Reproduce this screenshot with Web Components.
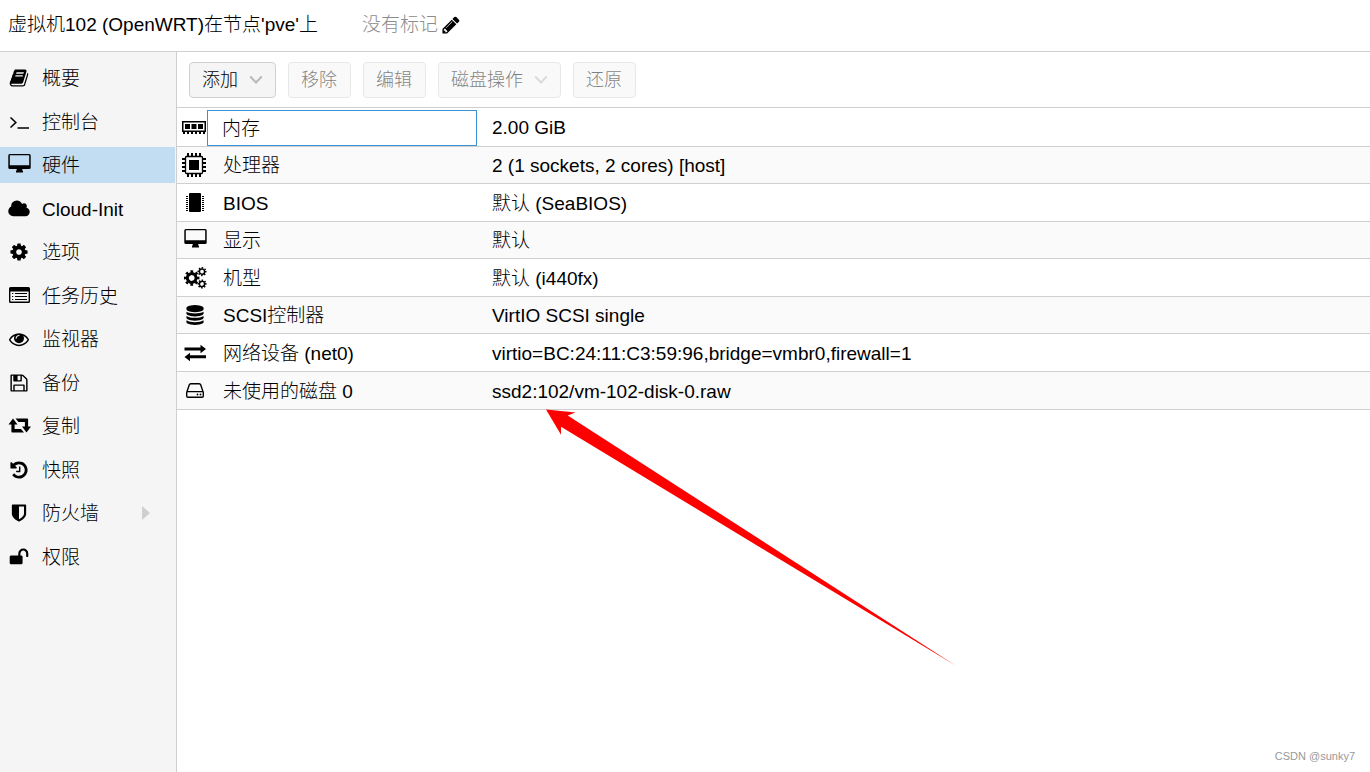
<!DOCTYPE html>
<html lang="zh-CN">
<head>
<meta charset="utf-8">
<meta name="viewport" content="width=device-width, initial-scale=1">
<title>虚拟机102 (OpenWRT)</title>
<style>
  html, body { margin: 0; }
  body {
    font-family: "Liberation Sans", "Noto Sans CJK SC", sans-serif;
    font-size: 19px;
    font-weight: 300;
    line-height: 24px;
    color: #000;
    background: #fff;
  }
</style>
</head>
<body>
<pve-app></pve-app>

<script>
const COG = 'M1152 896q0-106-75-181t-181-75-181 75-75 181 75 181 181 75 181-75 75-181zm512-109v222q0 12-8 23t-20 13l-185 28q-19 54-39 91 35 50 107 138 10 12 10 25t-9 23q-27 37-99 108t-94 71q-12 0-26-9l-138-108q-44 23-91 38-16 136-29 186-7 28-36 28h-222q-14 0-24.5-8.5t-11.5-21.5l-28-184q-49-16-90-37l-141 107q-10 9-25 9-14 0-25-11-126-114-165-168-7-10-7-23 0-12 8-23 15-21 51-66.5t54-70.5q-27-50-41-99l-183-27q-13-2-21-12.5t-8-23.5v-222q0-12 8-23t19-13l186-28q14-46 39-92-40-57-107-138-10-12-10-24 0-10 9-23 26-36 98.5-107.5t94.5-71.5q13 0 26 10l138 107q44-23 91-38 16-136 29-186 7-28 36-28h222q14 0 24.5 8.5t11.5 21.5l28 184q49 16 90 37l142-107q9-9 24-9 13 0 25 10 129 119 165 170 7 8 7 22 0 12-8 23-15 21-51 66.5t-54 70.5q26 50 41 98l183 28q13 2 21 12.5t8 23.5z';
const WIDE = '-179 -179 2150 2150';
const BOX = '0 0 24 24';
const ticks = [5, 9, 13, 17];

// A gear as a solid ring with eight dashes around it for the teeth.
const gear = (x, y, ring, width, teeth, depth) => {
  const dash = (2 * Math.PI * teeth / 16).toFixed(3);
  return `<g fill="none" stroke="currentColor" transform="translate(${x} ${y}) rotate(-12)"><circle r="${ring}" stroke-width="${width}"/><circle r="${teeth}" stroke-width="${depth}" stroke-dasharray="${dash}"/></g>`;
};

// name: [viewBox, markup]
const ICONS = {
  pencil: [WIDE, '<path d="M491 1536l91-91-235-235-91 91v107h128v128h107zm523-928q0-22-22-22-10 0-17 7l-542 542q-7 7-7 17 0 22 22 22 10 0 17-7l542-542q7-7 7-17zm-54-192l416 416-832 832h-416v-416zm683 96q0 53-37 90l-166 166-416-416 166-165q36-38 90-38 53 0 91 38l235 234q37 39 37 91z"/>'],
  book: [WIDE, '<path d="M1703 478q40 57 18 129l-275 906q-19 64-76.5 107.5t-122.5 43.5h-923q-77 0-148.5-53.5t-99.5-131.5q-24-67-2-127 0-4 3-27t4-37q1-8-3-21.5t-3-19.5q2-11 8-21t16.5-23.5 16.5-23.5q23-38 45-91.5t30-91.5q3-10 .5-30t-.5-28q3-11 17-28t17-23q21-36 42-92t25-90q1-9-2.5-32t.5-28q4-13 22-30.5t22-22.5q19-26 42.5-84.5t27.5-96.5q1-8-3-25.5t-2-26.5q2-8 9-18t18-23 17-21q8-12 16.5-30.5t15-35 16-36 19.5-32 26.5-23.5 36-11.5 47.5 5.5l-1 3q38-9 51-9h761q74 0 114 56t18 130l-274 906q-36 119-71.5 153.5t-128.5 34.5h-869q-27 0-38 15-11 16-1 43 24 70 144 70h923q29 0 56-15.5t35-41.5l300-987q7-22 5-57 38 15 59 43zm-1064 2q-4 13 2 22.5t20 9.5h608q13 0 25.5-9.5t16.5-22.5l21-64q4-13-2-22.5t-20-9.5h-608q-13 0-25.5 9.5t-16.5 22.5zm-83 256q-4 13 2 22.5t20 9.5h608q13 0 25.5-9.5t16.5-22.5l21-64q4-13-2-22.5t-20-9.5h-608q-13 0-25.5 9.5t-16.5 22.5z"/>'],
  terminal: [BOX, '<path d="M3.5 7.5l5.3 5-5.3 5M10.5 18h11.5" fill="none" stroke="currentColor" stroke-width="1.6"/>'],
  desktop: [BOX, '<path fill-rule="evenodd" d="M2.8 1H22.2Q23.7 1 23.7 2.5V14.6Q23.7 16.1 22.2 16.1H15.2Q15.2 17.6 16 18.3V19.6H9V18.3Q9.8 17.6 9.8 16.1H2.8Q1.3 16.1 1.3 14.6V2.5Q1.3 1 2.8 1zM2.8 2.3V12.3H22.2V2.3z"/>'],
  cloud: ['-51 -179 2150 2150', '<path d="M1984 1152q0 159-112.5 271.5t-271.5 112.5h-1088q-185 0-316.5-131.5t-131.5-316.5q0-132 71-241.5t187-163.5q-2-28-2-43 0-212 150-362t362-150q158 0 286.5 88t187.5 230q70-62 166-62 106 0 181 75t75 181q0 75-41 138 129 30 213 134.5t84 239.5z"/>'],
  cog: [WIDE, `<path d="${COG}"/>`],
  cogs: [BOX, gear(8.7, 12, 4.4, 3, 6.6, 2.4) + gear(19, 5.6, 2.6, 1.5, 3.8, 1.5) + gear(19, 18, 2.6, 1.5, 3.8, 1.5)],
  list: [BOX, '<path fill-rule="evenodd" d="M3.5 3H21.5Q23 3 23 4.5V17.5Q23 19 21.5 19H3.5Q2 19 2 17.5V4.5Q2 3 3.5 3zM3.4 7.5V17.6H21.6V7.5z"/><path d="M5 9.500h1.3M8 9.500h12M5 12.500h1.3M8 12.500h12M5 15.500h1.3M8 15.500h12" stroke="currentColor" stroke-width="1.2"/>'],
  eye: [WIDE, '<path d="M1664 960q-152-236-381-353 61 104 61 225 0 185-131.5 316.5t-316.5 131.5-316.5-131.5-131.5-316.5q0-121 61-225-229 117-381 353 133 205 333.5 326.5t434.5 121.5 434.5-121.5 333.5-326.5zm-720-384q0-20-14-34t-34-14q-125 0-214.5 89.5t-89.5 214.5q0 20 14 34t34 14 34-14 14-34q0-86 61-147t147-61q20 0 34-14t14-34zm848 384q0 34-20 69-140 230-376.5 368.5t-499.5 138.5-499.5-139-376.5-368q-20-35-20-69t20-69q140-229 376.5-368t499.5-139 499.5 139 376.5 368q20 35 20 69z"/>'],
  floppy: [WIDE, '<path d="M512 1536h768v-384h-768v384zm896 0h128v-896q0-14-10-38.5t-20-34.5l-281-281q-10-10-34-20t-39-10v416q0 40-28 68t-68 28h-576q-40 0-68-28t-28-68v-416h-128v1280h128v-416q0-40 28-68t68-28h832q40 0 68 28t28 68v416zm-384-928v-320q0-13-9.5-22.5t-22.5-9.5h-192q-13 0-22.5 9.5t-9.5 22.5v320q0 13 9.5 22.5t22.5 9.5h192q13 0 22.5-9.5t9.5-22.5zm640 32v928q0 40-28 68t-68 28h-1344q-40 0-68-28t-28-68v-1344q0-40 28-68t68-28h928q40 0 88 20t76 48l280 280q28 28 48 76t20 88z"/>'],
  retweet: [BOX, '<path d="M1.500 10.600L6 4.500l4.500 6.100H7.600V15H14l3 3.500H5.200q-.8 0-.8-.8V10.600zM24 12.400L19.500 18.500 15 12.400h2.900V8H11.500l-3-3.500H20.300q.8 0 .8.8V12.400z"/>'],
  history: [WIDE, '<path d="M1664 896q0 156-61 298t-164 245-245 164-298 61q-172 0-327-72.5t-264-204.5q-7-10-6.5-22.5t8.5-20.5l137-138q10-9 25-9 16 2 23 12 73 95 179 147t225 52q104 0 198.5-40.5t163.5-109.5 109.5-163.5 40.5-198.5-40.5-198.5-109.5-163.5-163.5-109.5-198.5-40.5q-98 0-188 35.5t-160 101.5l137 138q31 30 14 69-17 40-59 40h-448q-26 0-45-19t-19-45v-448q0-42 40-59 39-17 69 14l130 129q107-101 244.5-156.5t284.5-55.5q156 0 298 61t245 164 164 245 61 298zm-640-288v448q0 14-9 23t-23 9h-320q-14 0-23-9t-9-23v-64q0-14 9-23t23-9h224v-352q0-14 9-23t23-9h64q14 0 23 9t9 23z"/>'],
  shield: [WIDE, '<path d="M1344 960v-640h-448v1137q119-63 213-137 235-184 235-360zm192-768v768q0 86-33.5 170.5t-83 150-118 127.5-126.5 103-121 77.5-89.5 49.5-42.5 20q-12 6-26 6t-26-6q-16-7-42.5-20t-89.5-49.5-121-77.5-126.5-103-118-127.5-83-150-33.5-170.5v-768q0-26 19-45t45-19h1152q26 0 45 19t19 45z"/>'],
  unlock: [WIDE, '<path d="M1728 576v256q0 26-19 45t-45 19h-64q-26 0-45-19t-19-45v-256q0-106-75-181t-181-75-181 75-75 181v192h96q40 0 68 28t28 68v576q0 40-28 68t-68 28h-960q-40 0-68-28t-28-68v-576q0-40 28-68t68-28h672v-192q0-185 131.5-316.5t316.5-131.5 316.5 131.5 131.5 316.5z"/>'],
  memory: ['1 0 24 24', '<path fill-rule="evenodd" d="M0 6H24V17H0zM1.500 7.500V15.500H22.500V7.500z"/><path d="M3 9h5v5H3zM9.500 9h5v5H9.500zM16 9h5v5H16z"/><path d="M1 18h22" stroke="currentColor" stroke-width="2" stroke-dasharray="2 2"/>'],
  cpu: ['1 0 24 24', '<rect x="3.500" y="3.500" width="17" height="17" rx="1" fill="none" stroke="currentColor" stroke-width="1.300"/><path d="M7 7h10v10H7z"/>' + ticks.map(t => `<path d="M${t} 0h2v3h-2zM${t} 21h2v3h-2zM0 ${t}h3v2H0zM21 ${t}h3v2h-3z"/>`).join('')],
  chip: [BOX, '<rect x="6" y="2" width="12" height="19" rx="1"/><path d="M4 5v15M20 5v15" stroke="currentColor" stroke-width="2" stroke-dasharray="1 1"/>'],
  database: [WIDE, '<path d="M896 768q237 0 443-43t325-127v170q0 69-103 128t-280 93.5-385 34.5-385-34.5-280-93.5-103-128v-170q119 84 325 127t443 43zm0 768q237 0 443-43t325-127v170q0 69-103 128t-280 93.5-385 34.5-385-34.5-280-93.5-103-128v-170q119 84 325 127t443 43zm0-384q237 0 443-43t325-127v170q0 69-103 128t-280 93.5-385 34.5-385-34.5-280-93.5-103-128v-170q119 84 325 127t443 43zm0-1152q208 0 385 34.5t280 93.5 103 128v128q0 69-103 128t-280 93.5-385 34.5-385-34.5-280-93.5-103-128v-128q0-69 103-128t280-93.5 385-34.5z"/>'],
  exchange: [BOX, '<path d="M1.500 6.500H17.500V3.700L23 8l-5.500 4.200V9.500H1.500zM23 14.200H7V11.800L1.500 16 7 20.200V17.300H23z"/>'],
  hdd: [BOX, '<path d="M3.700 13.500L6.300 5.800Q6.700 4.700 7.800 4.700H16.200Q17.300 4.700 17.700 5.800L20.300 13.500V17Q20.300 18.300 19 18.300H5Q3.700 18.300 3.700 17zM4 12.600H20" fill="none" stroke="currentColor" stroke-width="1.400"/><circle cx="14.500" cy="15.500" r=".9"/><circle cx="17.500" cy="15.500" r=".9"/>']
};

class PveIcon extends HTMLElement {
  connectedCallback() {
    const [box, body] = ICONS[this.getAttribute('name')];
    this.attachShadow({ mode: 'open' }).innerHTML = `
      <style>
        :host { display: block; flex: none; width: 24px; height: 24px; }
        svg { display: block; width: 100%; height: 100%; overflow: visible; fill: currentColor; }
      </style>
      <svg viewBox="${box}" aria-hidden="true">${body}</svg>`;
  }
}
customElements.define('pve-icon', PveIcon);

class PveHeader extends HTMLElement {
  connectedCallback() {
    this.attachShadow({ mode: 'open' }).innerHTML = `
      <style>
        :host { display: flex; align-items: center; height: 50px; padding: 0 8px 1px; border-bottom: 1px solid #cfcfcf; }
        h1 { margin: 0 44px 0 0; font: inherit; }
        .tags { display: flex; align-items: center; gap: 1px; color: #8c8c8c; }
        button { padding: 0; border: 0; background: none; color: #000; }
      </style>
      <h1><slot></slot></h1>
      <div class="tags"><slot name="tags"></slot>
        <button type="button" aria-label="编辑标记"><pve-icon name="pencil"></pve-icon></button>
      </div>`;
  }
}
customElements.define('pve-header', PveHeader);

class PveNavItem extends HTMLElement {
  connectedCallback() {
    this.attachShadow({ mode: 'open' }).innerHTML = `
      <style>
        :host { display: block; }
        a { display: flex; align-items: center; gap: 11px; height: 36px; padding: 0 25px 0 7px; color: inherit; text-decoration: none; }
        :host([selected]) a { background: #c2ddf2; }
        .label { flex: 1; padding-top: 2px; }
        svg { display: none; width: 8px; height: 14px; fill: #cfcfcf; }
        :host([expandable]) svg { display: block; }
      </style>
      <a href="#${this.getAttribute('icon')}">
        <pve-icon name="${this.getAttribute('icon')}"></pve-icon>
        <span class="label"><slot></slot></span>
        <svg viewBox="0 0 8 14" aria-hidden="true"><path d="M0 0L8 7 0 14z"/></svg>
      </a>`;
  }
}
customElements.define('pve-nav-item', PveNavItem);

class PveNav extends HTMLElement {
  connectedCallback() {
    this.attachShadow({ mode: 'open' }).innerHTML = `
      <style>
        :host { display: block; flex: none; box-sizing: border-box; width: 177px; padding: 8px 1px 8px 0; background: #f5f5f5; border-right: 1px solid #cfcfcf; }
        nav { display: flex; flex-direction: column; gap: 7px; }
        ::slotted(:nth-child(odd)) { margin-bottom: 1px; }
      </style>
      <nav aria-label="虚拟机"><slot></slot></nav>`;
  }
}
customElements.define('pve-nav', PveNav);

class PveButton extends HTMLElement {
  connectedCallback() {
    this.attachShadow({ mode: 'open' }).innerHTML = `
      <style>
        :host { display: block; }
        button {
          display: flex; align-items: center; gap: 11px; box-sizing: border-box;
          height: 36px; padding: 0 13px 0 12px; border: 1px solid #d0d0d0; border-radius: 4px;
          background: #f5f5f5; color: #000; font: inherit; font-size: 18px; white-space: nowrap;
        }
        button:disabled { opacity: .5; }
        svg { display: none; width: 14px; height: 10px; fill: none; stroke: #b8b8b8; stroke-width: 2; }
        :host([menu]) svg { display: block; }
        :host([menu]) button { padding-right: 12px; }
      </style>
      <button type="button" ${this.hasAttribute('disabled') ? 'disabled' : ''}>
        <slot></slot>
        <svg viewBox="0 0 14 10" aria-hidden="true"><path d="M1.200 1.500L7 7.500 12.800 1.500"/></svg>
      </button>`;
  }
}
customElements.define('pve-button', PveButton);

class PveToolbar extends HTMLElement {
  connectedCallback() {
    this.attachShadow({ mode: 'open' }).innerHTML = `
      <style>
        :host { display: flex; flex-wrap: wrap; gap: 12px; padding: 10px 12px 9px; border-bottom: 1px solid #cfcfcf; }
      </style>
      <slot></slot>`;
  }
}
customElements.define('pve-toolbar', PveToolbar);

const HARDWARE = [
  ['memory', '内存', '2.00 GiB'],
  ['cpu', '处理器', '2 (1 sockets, 2 cores) [host]'],
  ['chip', 'BIOS', '默认 (SeaBIOS)'],
  ['desktop', '显示', '默认'],
  ['cogs', '机型', '默认 (i440fx)'],
  ['database', 'SCSI控制器', 'VirtIO SCSI single'],
  ['exchange', '网络设备 (net0)', 'virtio=BC:24:11:C3:59:96,bridge=vmbr0,firewall=1'],
  ['hdd', '未使用的磁盘 0', 'ssd2:102/vm-102-disk-0.raw']
];

class PveHardware extends HTMLElement {
  connectedCallback() {
    const rows = HARDWARE.map(([icon, name, value], i) => `
      <tr${i === 0 ? ' class="focused"' : ''}>
        <td class="icon"><pve-icon name="${icon}"></pve-icon></td>
        <th scope="row"><div>${name}</div></th>
        <td class="value">${value}</td>
      </tr>`).join('');
    this.attachShadow({ mode: 'open' }).innerHTML = `
      <style>
        :host { display: block; }
        table { width: 100%; border-collapse: separate; border-spacing: 0; table-layout: fixed; }
        .c-icon { width: 30px; }
        .c-name { width: 270px; }
        tr { height: 38px; }
        tr:nth-child(even) { height: 37px; background: #fafafa; }
        tr:first-child { height: 39px; }
        tr:last-child { height: 38px; }
        td, th { padding: 2px 0 0; border-bottom: 1px solid #cfcfcf; font-weight: inherit; text-align: left; }
        .icon { padding: 0 0 0 6px; }
        .icon pve-icon { margin-right: -6px; }
        th div { padding-left: 16px; }
        .focused th { padding: 0; vertical-align: bottom; }
        .focused th div { box-sizing: border-box; height: 36px; padding: 1px 0 0 14px; border: 1px solid #3892d4; line-height: 34px; }
        .value { padding-left: 15px; }
      </style>
      <table>
        <colgroup><col class="c-icon"><col class="c-name"><col></colgroup>
        <tbody>${rows}</tbody>
      </table>`;
  }
}
customElements.define('pve-hardware', PveHardware);

// Red pointer laid over the panel, aimed at the unused disk.
class NoteArrow extends HTMLElement {
  connectedCallback() {
    this.attachShadow({ mode: 'open' }).innerHTML = `
      <style>
        :host { display: block; position: absolute; left: 369px; top: 357px; pointer-events: none; }
        svg { display: block; width: 412px; height: 258px; }
      </style>
      <svg viewBox="0 0 412 258" aria-hidden="true">
        <path fill="#f00" d="M0 .500L29.500 3.500 21.700 6.500 409.500 256.500 15 17.800V25.700z"/>
      </svg>`;
  }
}
customElements.define('note-arrow', NoteArrow);

class PveApp extends HTMLElement {
  connectedCallback() {
    this.attachShadow({ mode: 'open' }).innerHTML = `
      <style>
        :host { display: flex; flex-direction: column; min-height: 100vh; position: relative; }
        .body { display: flex; flex: 1; }
        main { position: relative; flex: 1; min-width: 0; }
        .credit { position: absolute; right: 15px; bottom: 8px; font-size: 11px; line-height: 16px; color: #999; }
      </style>
      <pve-header>虚拟机102 (OpenWRT)在节点'pve'上<span slot="tags">没有标记</span></pve-header>
      <div class="body">
        <pve-nav>
          <pve-nav-item icon="book">概要</pve-nav-item>
          <pve-nav-item icon="terminal">控制台</pve-nav-item>
          <pve-nav-item icon="desktop" selected>硬件</pve-nav-item>
          <pve-nav-item icon="cloud">Cloud-Init</pve-nav-item>
          <pve-nav-item icon="cog">选项</pve-nav-item>
          <pve-nav-item icon="list">任务历史</pve-nav-item>
          <pve-nav-item icon="eye">监视器</pve-nav-item>
          <pve-nav-item icon="floppy">备份</pve-nav-item>
          <pve-nav-item icon="retweet">复制</pve-nav-item>
          <pve-nav-item icon="history">快照</pve-nav-item>
          <pve-nav-item icon="shield" expandable>防火墙</pve-nav-item>
          <pve-nav-item icon="unlock">权限</pve-nav-item>
        </pve-nav>
        <main>
          <pve-toolbar>
            <pve-button menu>添加</pve-button>
            <pve-button disabled>移除</pve-button>
            <pve-button disabled>编辑</pve-button>
            <pve-button disabled menu>磁盘操作</pve-button>
            <pve-button disabled>还原</pve-button>
          </pve-toolbar>
          <pve-hardware></pve-hardware>
          <note-arrow></note-arrow>
        </main>
      </div>
      <div class="credit">CSDN @sunky7</div>`;
  }
}
customElements.define('pve-app', PveApp);
</script>
</body>
</html>
